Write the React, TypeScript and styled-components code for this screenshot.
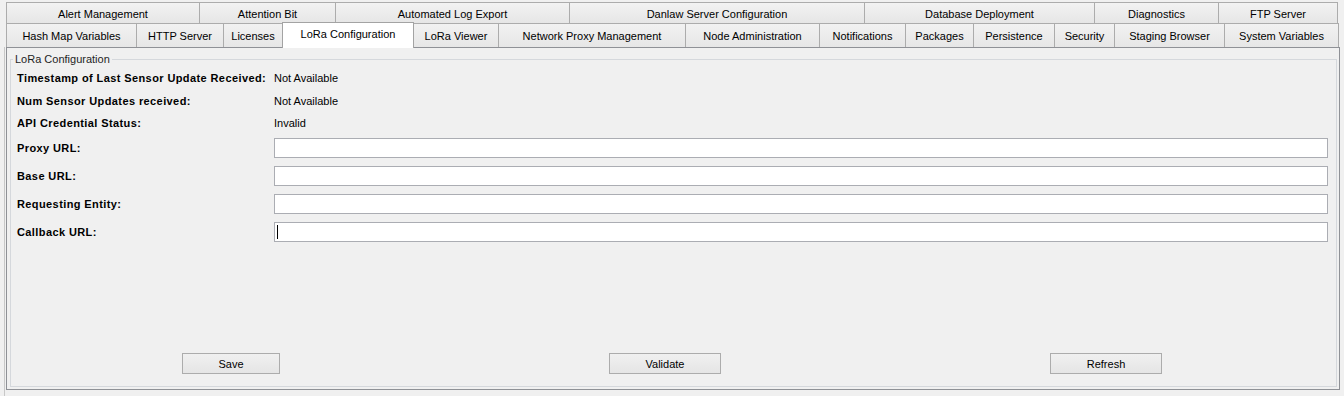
import React from "react";
import styled, { createGlobalStyle } from "styled-components";

const Global = createGlobalStyle`
  html, body { margin: 0; padding: 0; background: #f0f0f0; }
  body { font-family: "Liberation Sans", Arial, sans-serif; font-size: 11px; color: #000; }
  * { box-sizing: border-box; }
`;

const Shell = styled.div`
  height: 396px;
  display: flex;
  flex-direction: column;
  padding: 2px 0 0 6px;
  overflow: hidden;
`;

const TabRow = styled.div<{ $h: number }>`
  display: flex;
  align-items: flex-start;
  height: ${(p) => p.$h}px;
  padding-left: 1px;
`;

const Tab = styled.div<{ $w: number; $top?: boolean }>`
  flex: none;
  width: ${(p) => p.$w + 1}px;
  height: 100%;
  margin-left: -1px;
  display: flex;
  align-items: center;
  justify-content: center;
  padding-top: ${(p) => (p.$top ? 2 : 0)}px;
  border: 1px solid #acacac;
  border-bottom: none;
  background: linear-gradient(#f2f2f2, #e6e6e6);
  white-space: nowrap;
  font-size: 11px;
`;

const SelectedTab = styled(Tab)`
  position: relative;
  z-index: 2;
  height: 26px;
  margin-top: -1px;
  padding-bottom: 3px;
  background: #ffffff;
  border-color: #a3a3a3;
`;

const PanelOuter = styled.div`
  flex: 1;
  margin-left: -2px;
  padding-left: 1px;
  border-left: 1px solid #c8c8c8;
`;

const Panel = styled.div`
  height: 343px;
  width: 1334px;
  border: 1px solid #8f9196;
  background: #f0f0f0;
  padding: 5px 2px 2px 3px;
  display: flex;
  flex-direction: column;
`;

const Group = styled.fieldset`
  flex: 1;
  margin: 0;
  min-width: 0;
  border: 1px solid #d5d8dc;
  padding: 1px 8px 12px 6px;
  display: flex;
  flex-direction: column;
`;

const Legend = styled.legend`
  margin-left: -4px;
  padding: 0 2px;
  line-height: 13px;
  font-size: 11px;
  color: #1e1e1e;
`;

const Row = styled.div<{ $h: number; $mt?: number }>`
  display: grid;
  grid-template-columns: 257px 1fr;
  align-items: center;
  height: ${(p) => p.$h}px;
  margin-top: ${(p) => p.$mt ?? 0}px;
`;

const Label = styled.span`
  font-weight: bold;
  letter-spacing: 0.4px;
  white-space: nowrap;
`;

const Value = styled.span`
  white-space: nowrap;
`;

const Field = styled.div`
  height: 20px;
  border: 1px solid #abadb3;
  background: #ffffff;
  display: flex;
  align-items: center;
  padding-left: 2px;
`;

const Caret = styled.span`
  display: block;
  width: 1px;
  height: 14px;
  background: #000;
`;

const ButtonRow = styled.div`
  margin-top: auto;
  display: flex;
  justify-content: space-between;
  padding: 0 166px 0 165px;
`;

const Button = styled.button<{ $w: number }>`
  width: ${(p) => p.$w}px;
  height: 21px;
  padding: 0;
  border: 1px solid #acacac;
  background: linear-gradient(#f0f0f0, #e5e5e5);
  font-family: "Liberation Sans", Arial, sans-serif;
  font-size: 11px;
  color: #000;
`;

const topTabs: [string, number][] = [
  ["Alert Management", 193],
  ["Attention Bit", 136],
  ["Automated Log Export", 234],
  ["Danlaw Server Configuration", 295],
  ["Database Deployment", 230],
  ["Diagnostics", 124],
  ["FTP Server", 119],
];

const bottomTabs: [string, number][] = [
  ["Hash Map Variables", 130],
  ["HTTP Server", 87],
  ["Licenses", 59],
  ["LoRa Configuration", 131],
  ["LoRa Viewer", 85],
  ["Network Proxy Management", 187],
  ["Node Administration", 134],
  ["Notifications", 86],
  ["Packages", 68],
  ["Persistence", 81],
  ["Security", 60],
  ["Staging Browser", 110],
  ["System Variables", 114],
];

const info: [string, string, number][] = [
  ["Timestamp of Last Sensor Update Received:", "Not Available", 22],
  ["Num Sensor Updates received:", "Not Available", 23],
  ["API Credential Status:", "Invalid", 22],
];

const fields = ["Proxy URL:", "Base URL:", "Requesting Entity:", "Callback URL:"];

export default function App() {
  return (
    <>
      <Global />
      <Shell>
        <TabRow $h={21}>
          {topTabs.map(([t, w]) => (
            <Tab key={t} $w={w} $top>
              {t}
            </Tab>
          ))}
        </TabRow>
        <TabRow $h={24}>
          {bottomTabs.map(([t, w]) =>
            t === "LoRa Configuration" ? (
              <SelectedTab key={t} $w={w}>
                {t}
              </SelectedTab>
            ) : (
              <Tab key={t} $w={w}>
                {t}
              </Tab>
            )
          )}
        </TabRow>
        <PanelOuter>
          <Panel>
            <Group>
              <Legend>LoRa Configuration</Legend>
              {info.map(([l, v, h]) => (
                <Row key={l} $h={h}>
                  <Label>{l}</Label>
                  <Value>{v}</Value>
                </Row>
              ))}
              {fields.map((f, i) => (
                <Row key={f} $h={20} $mt={i === 0 ? 4 : 8}>
                  <Label>{f}</Label>
                  <Field>{i === 3 && <Caret />}</Field>
                </Row>
              ))}
              <ButtonRow>
                <Button $w={98}>Save</Button>
                <Button $w={112}>Validate</Button>
                <Button $w={112}>Refresh</Button>
              </ButtonRow>
            </Group>
          </Panel>
        </PanelOuter>
      </Shell>
    </>
  );
}
